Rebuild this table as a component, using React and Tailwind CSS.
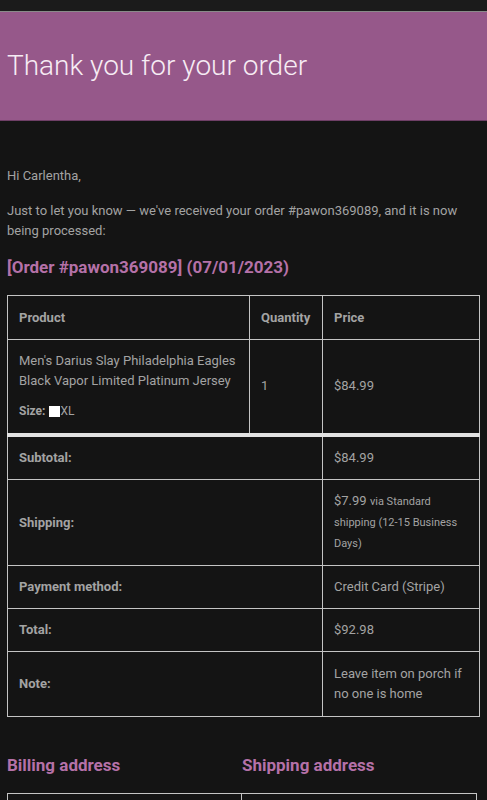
import React from 'react';

const cell = 'border border-[#c4c4c4] px-[11px] py-[11px] text-left align-middle';

function App() {
  return (
    <div className="min-h-screen bg-[#141414] text-[#a3a3a3] text-[13px] leading-5" style={{ fontFamily: 'Roboto, "Liberation Sans", sans-serif' }}>
      {/* Top strip */}
      <div className="h-3 bg-[#1b1b1b] border-b border-[#8a8a8a]" />

      {/* Header */}
      <div className="h-[109px] bg-[#96588a] border-b border-[#6e3f66] flex items-center px-[7px]">
        <h1 className="text-[28px] font-light text-[#f6ecf4]">Thank you for your order</h1>
      </div>

      <div className="px-[7px] pt-[45px]">
        <p>Hi Carlentha,</p>
        <p className="mt-[15px]">
          Just to let you know — we've received your order #pawon369089, and it is now being processed:
        </p>

        <h2 className="mt-[14px] text-[17px] font-bold text-[#b571a8] leading-6">
          [Order #pawon369089] (07/01/2023)
        </h2>

        <table className="mt-[16px] w-[472px] table-fixed border-collapse">
          <colgroup>
            <col className="w-[242px]" />
            <col className="w-[73px]" />
            <col className="w-[157px]" />
          </colgroup>
          <thead>
            <tr className="h-[44px]">
              <th className={`${cell} font-bold`}>Product</th>
              <th className={`${cell} font-bold`}>Quantity</th>
              <th className={`${cell} font-bold`}>Price</th>
            </tr>
          </thead>
          <tbody>
            <tr className="h-[95px]">
              <td className={cell}>
                <div>Men's Darius Slay Philadelphia Eagles Black Vapor Limited Platinum Jersey</div>
                <div className="mt-[10px] flex items-center text-[12px]">
                  <span className="font-bold">Size:</span>
                  <span className="ml-1 inline-block w-[11px] h-[11px] bg-white" />
                  <span>XL</span>
                </div>
              </td>
              <td className={cell}>1</td>
              <td className={cell}>$84.99</td>
            </tr>
          </tbody>
          <tfoot>
            <tr className="h-[45px]">
              <th colSpan={2} className={`${cell} font-bold border-t-4 border-t-[#e2e2e2]`}>Subtotal:</th>
              <td className={`${cell} border-t-4 border-t-[#e2e2e2]`}>$84.99</td>
            </tr>
            <tr className="h-[85px]">
              <th colSpan={2} className={`${cell} font-bold`}>Shipping:</th>
              <td className={`${cell} leading-[20px]`}>
                $7.99 <span className="text-[11px] leading-[20px]">via Standard shipping (12-15 Business Days)</span>
              </td>
            </tr>
            <tr className="h-[42px]">
              <th colSpan={2} className={`${cell} font-bold`}>Payment method:</th>
              <td className={cell}>Credit Card (Stripe)</td>
            </tr>
            <tr className="h-[43px]">
              <th colSpan={2} className={`${cell} font-bold`}>Total:</th>
              <td className={cell}>$92.98</td>
            </tr>
            <tr className="h-[65px]">
              <th colSpan={2} className={`${cell} font-bold`}>Note:</th>
              <td className={cell}>Leave item on porch if no one is home</td>
            </tr>
          </tfoot>
        </table>

        <div className="mt-[36px] grid grid-cols-[235px_235px]">
          <div>
            <h2 className="text-[17px] font-bold text-[#b571a8] leading-6">Billing address</h2>
            <div className="mt-[16px] h-10 border border-[#c4c4c4]" />
          </div>
          <div>
            <h2 className="text-[17px] font-bold text-[#b571a8] leading-6">Shipping address</h2>
            <div className="mt-[16px] h-10 border border-l-0 border-[#c4c4c4]" />
          </div>
        </div>
      </div>
    </div>
  );
}

export default App;
